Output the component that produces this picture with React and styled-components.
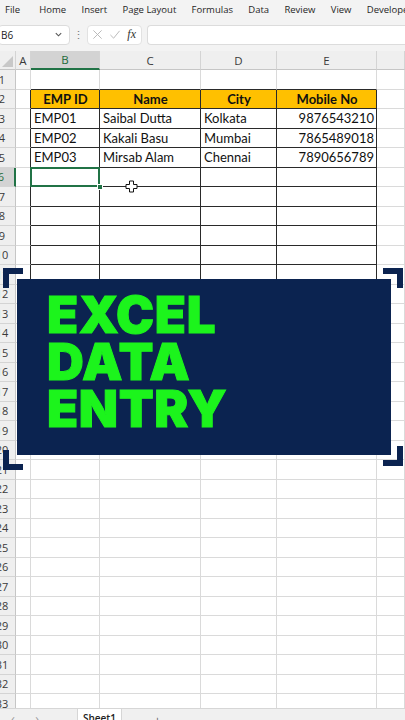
import React from 'react';
import styled, { createGlobalStyle } from 'styled-components';

const GlobalStyle = createGlobalStyle`
  * { box-sizing: border-box; }
  body {
    margin: 0;
    background: #ffffff;
    font-family: 'Open Sans', 'Liberation Sans', sans-serif;
  }
`;

const COLS = ['A', 'B', 'C', 'D', 'E', 'F'];
const TEMPLATE = '16px 15px 69px 101px 76px 100px 1fr';
const TABS = ['File', 'Home', 'Insert', 'Page Layout', 'Formulas', 'Data', 'Review', 'View', 'Developer'];

const DATA = {
  2: ['EMP ID', 'Name', 'City', 'Mobile No'],
  3: ['EMP01', 'Saibal Dutta', 'Kolkata', '9876543210'],
  4: ['EMP02', 'Kakali Basu', 'Mumbai', '7865489018'],
  5: ['EMP03', 'Mirsab Alam', 'Chennai', '7890656789'],
};

// table B:E, rows 2..12 have dark borders
const inTable = (r, c) => r >= 2 && r <= 12 && c >= 1 && c <= 4;

const App = () => {
  const rows = Array.from({ length: 34 }, (_, i) => i + 1);
  return (
    <Page>
      <GlobalStyle />
      <Ribbon>
        {TABS.map((t) => (
          <Tab key={t}>{t}</Tab>
        ))}
      </Ribbon>
      <FormulaBar>
        <NameBox>
          <span>B6</span>
          <svg width='9' height='9' viewBox='0 0 10 10' fill='none' stroke='#555' strokeWidth='1.2'>
            <path d='M2 3.5 5 6.5 8 3.5' />
          </svg>
        </NameBox>
        <Dots>⋮</Dots>
        <FxBox>
          <svg width='11' height='11' viewBox='0 0 12 12' fill='none' stroke='#b5b5b5' strokeWidth='1'>
            <path d='M1.5 1.5 10.5 10.5M10.5 1.5 1.5 10.5' />
          </svg>
          <svg width='12' height='11' viewBox='0 0 12 12' fill='none' stroke='#b5b5b5' strokeWidth='1'>
            <path d='M1 6.5 4.5 10 11 2' />
          </svg>
          <Fx>fx</Fx>
        </FxBox>
        <Input />
      </FormulaBar>
      <Sheet>
        <Row>
          <Corner>
            <svg width='12' height='12' viewBox='0 0 12 12'>
              <path d='M12 1 12 12 1 12Z' fill='#c8c8c8' />
            </svg>
          </Corner>
          {COLS.map((c) => (
            <ColHead key={c} selected={c === 'B'}>
              {c === 'F' ? '' : c}
            </ColHead>
          ))}
        </Row>
        {rows.map((r) => (
          <Row key={r}>
            <RowHead selected={r === 6}>
              <span>{r}</span>
            </RowHead>
            {COLS.map((c, ci) => {
              const val = DATA[r] && ci >= 1 && ci <= 4 ? DATA[r][ci - 1] : '';
              const darkRight = inTable(r, ci) || inTable(r, ci + 1);
              const darkBottom = inTable(r, ci) || inTable(r + 1, ci);
              return (
                <Cell
                  key={c}
                  darkRight={darkRight}
                  darkBottom={darkBottom}
                  header={r === 2 && inTable(r, ci)}
                  align={r === 2 ? 'center' : ci === 4 ? 'right' : 'left'}
                >
                  {val}
                  {r === 6 && ci === 1 && (
                    <>
                      <Selection />
                      <Handle />
                    </>
                  )}
                </Cell>
              );
            })}
          </Row>
        ))}
        <Cursor>
          <svg width='13' height='13' viewBox='0 0 13 13'>
            <path
              d='M4.5 1h4v3.5H12v4H8.5V12h-4V8.5H1v-4h3.5z'
              fill='#fff'
              stroke='#111'
              strokeWidth='1'
            />
          </svg>
        </Cursor>
      </Sheet>
      <TabBar>
        <Nav>‹</Nav>
        <Nav>›</Nav>
        <SheetTab>Sheet1</SheetTab>
        <AddSheet>+</AddSheet>
      </TabBar>

      <Banner>
        <Title>
          EXCEL
          <br />
          DATA
          <br />
          ENTRY
        </Title>
      </Banner>
      <Bracket pos='tl' />
      <Bracket pos='tr' />
      <Bracket pos='bl' />
      <Bracket pos='br' />
    </Page>
  );
};

export default App;

const Page = styled.div`
  position: relative;
  width: 405px;
  height: 720px;
  overflow: hidden;
  display: flex;
  flex-direction: column;
  background: #f3f3f3;
`;

const Ribbon = styled.div`
  height: 19px;
  display: flex;
  align-items: center;
  gap: 15.3px;
  padding-left: 5px;
  white-space: nowrap;
  font-size: 9.5px;
  color: #262626;
`;

const Tab = styled.span`
  flex: none;
  &:first-child {
    margin-right: 4px;
  }
`;

const FormulaBar = styled.div`
  height: 32px;
  display: flex;
  align-items: center;
  padding: 0 0 1px 0;
  margin-left: -2px;
`;

const NameBox = styled.div`
  width: 72px;
  height: 20px;
  background: #fff;
  border: 1px solid #dcdcdc;
  border-radius: 4px;
  display: flex;
  align-items: center;
  justify-content: space-between;
  padding: 0 6px 0 2px;
  font-size: 10px;
  color: #222;
`;

const Dots = styled.span`
  width: 17px;
  text-align: center;
  font-size: 11px;
  color: #777;
`;

const FxBox = styled.div`
  width: 55px;
  height: 20px;
  background: #fff;
  border: 1px solid #e2e2e2;
  border-radius: 4px;
  display: flex;
  align-items: center;
  justify-content: space-between;
  padding: 0 5px 0 4px;
`;

const Fx = styled.span`
  font-family: 'Liberation Serif', serif;
  font-style: italic;
  font-size: 12px;
  color: #333;
`;

const Input = styled.div`
  flex: 1;
  height: 20px;
  margin-left: 5px;
  background: #fff;
  border: 1px solid #dcdcdc;
  border-right: none;
  border-radius: 4px 0 0 4px;
`;

const Sheet = styled.div`
  position: relative;
  flex: 1;
  overflow: hidden;
  background: #fff;
`;

const Row = styled.div`
  display: grid;
  grid-template-columns: ${TEMPLATE};
  height: 19.5px;
  &:first-child {
    height: 19px;
  }
`;

const Corner = styled.div`
  background: #efefef;
  border-right: 1px solid #d4d4d4;
  border-bottom: 1px solid #c6c6c6;
  display: flex;
  align-items: flex-end;
  justify-content: flex-end;
  padding: 0 2px 2px 0;
`;

const ColHead = styled.div`
  display: flex;
  align-items: center;
  justify-content: center;
  font-family: 'Open Sans', sans-serif;
  font-size: 11.5px;
  color: ${({ selected }) => (selected ? '#1d6b3a' : '#3a3a3a')};
  background: ${({ selected }) => (selected ? '#d3d3d3' : '#efefef')};
  border-right: 1px solid #d4d4d4;
  border-bottom: ${({ selected }) => (selected ? '2px solid #217346' : '1px solid #c6c6c6')};
`;

const RowHead = styled.div`
  display: flex;
  align-items: center;
  justify-content: flex-end;
  overflow: hidden;
  background: ${({ selected }) => (selected ? '#d3d3d3' : '#efefef')};
  border-right: ${({ selected }) => (selected ? '2px solid #217346' : '1px solid #c6c6c6')};
  border-bottom: 1px solid #d4d4d4;
  font-size: 11px;
  color: ${({ selected }) => (selected ? '#1d6b3a' : '#3a3a3a')};
  & > span {
    flex: none;
    width: 26px;
    text-align: center;
  }
`;

const Cell = styled.div`
  position: relative;
  display: flex;
  align-items: center;
  justify-content: ${({ align }) =>
    align === 'center' ? 'center' : align === 'right' ? 'flex-end' : 'flex-start'};
  padding: 0 2px 0 3px;
  white-space: nowrap;
  font-family: Lato, 'Open Sans', sans-serif;
  font-size: 13px;
  font-weight: ${({ header }) => (header ? 700 : 400)};
  color: #111;
  background: ${({ header }) => (header ? '#ffc000' : 'transparent')};
  border-right: 1px solid ${({ darkRight }) => (darkRight ? '#2a2a2a' : '#dadada')};
  border-bottom: 1px solid ${({ darkBottom }) => (darkBottom ? '#2a2a2a' : '#dadada')};
`;

const Selection = styled.div`
  position: absolute;
  z-index: 2;
  left: -1px;
  top: -1px;
  right: -1px;
  bottom: -1px;
  border: 2px solid #217346;
`;

const Handle = styled.div`
  position: absolute;
  z-index: 3;
  right: -4px;
  bottom: -4px;
  width: 6px;
  height: 6px;
  background: #217346;
  border: 1px solid #fff;
`;

const Cursor = styled.div`
  position: absolute;
  z-index: 4;
  left: 125px;
  top: 129px;
  line-height: 0;
`;

const TabBar = styled.div`
  height: 12px;
  display: flex;
  align-items: flex-start;
  background: #f0f0f0;
  border-top: 1px solid #d6d6d6;
  font-size: 10px;
  color: #555;
  overflow: hidden;
`;

const Nav = styled.span`
  width: 24px;
  text-align: center;
  color: #999;
  font-size: 12px;
  line-height: 12px;
  padding-top: 4px;
  &:first-child {
    margin-left: 1px;
  }
`;

const SheetTab = styled.span`
  margin-left: 28px;
  width: 45px;
  height: 14px;
  margin-top: -1px;
  background: #fff;
  border-left: 1px solid #d6d6d6;
  border-right: 1px solid #d6d6d6;
  text-align: center;
  font-weight: 600;
  color: #222;
  padding-top: 3px;
`;

const AddSheet = styled.span`
  margin-left: 32px;
  color: #666;
  font-size: 12px;
  padding-top: 3px;
`;

const Banner = styled.div`
  position: absolute;
  left: 17px;
  top: 279px;
  width: 374px;
  height: 176px;
  background: #0b2350;
  padding: 12px 0 0 30px;
`;

const Title = styled.div`
  font-family: Inter, 'Open Sans', sans-serif;
  font-weight: 900;
  font-size: 51px;
  line-height: 47px;
  letter-spacing: 0.6px;
  color: #1cf41c;
  -webkit-text-stroke: 1px #1cf41c;
`;

const BRACKETS = {
  tl: 'left: 3px; top: 268px; border-left-width: 6px; border-top-width: 6px;',
  tr: 'left: 383px; top: 268px; border-right-width: 6px; border-top-width: 6px;',
  bl: 'left: 3px; top: 450px; border-left-width: 6px; border-bottom-width: 6px;',
  br: 'left: 383px; top: 446px; border-right-width: 6px; border-bottom-width: 6px;',
};

const Bracket = styled.div`
  position: absolute;
  width: 20px;
  height: 20px;
  border: 0 solid #0b2350;
  ${({ pos }) => BRACKETS[pos]}
`;
